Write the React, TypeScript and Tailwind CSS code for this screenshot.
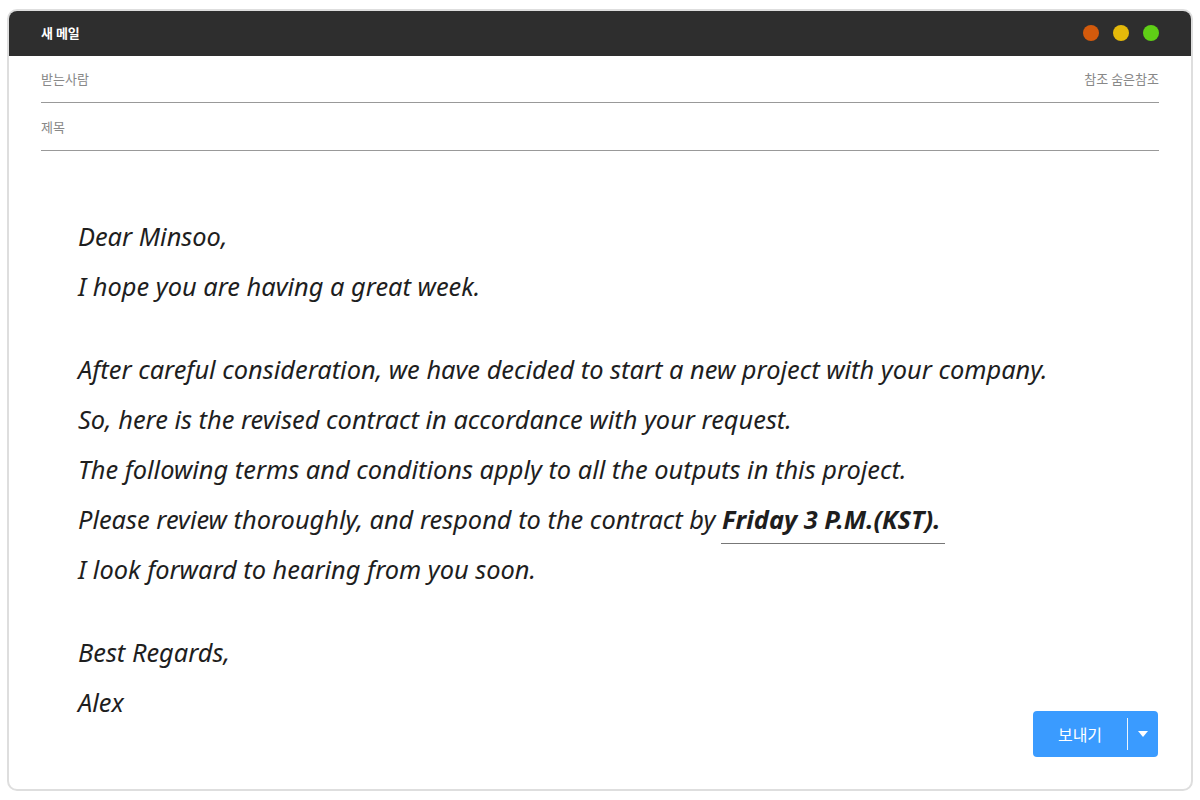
import React from 'react';

const kr = { fontFamily: '"Noto Sans CJK KR", "Noto Sans", sans-serif' };
const body = { fontFamily: '"Noto Sans", "Noto Sans CJK KR", sans-serif' };

export default function App() {
  return (
    <div className="min-h-screen bg-white pt-[9px] pl-[7px] pr-[7px]">
      <div className="flex h-[782px] w-[1186px] flex-col overflow-hidden rounded-[10px] border-2 border-[#dedede] bg-white">
        {/* Title bar */}
        <div className="-mx-[2px] -mt-[2px] flex h-[47px] items-center justify-between bg-[#2e2e2e] pl-[34px] pr-[34px]" style={kr}>
          <span className="text-[13px] font-bold text-white">새 메일</span>
          <div className="flex items-center gap-[14px]">
            <span className="h-4 w-4 rounded-full bg-[#d35a0c]" />
            <span className="h-4 w-4 rounded-full bg-[#e4b90a]" />
            <span className="h-4 w-4 rounded-full bg-[#5fcf16]" />
          </div>
        </div>

        {/* Fields */}
        <div className="px-[32px]" style={kr}>
          <div className="flex h-[47px] items-center justify-between border-b border-[#999] text-[13px] text-[#888]">
            <span>받는사람</span>
            <span>참조 숨은참조</span>
          </div>
          <div className="flex h-[48px] items-center border-b border-[#999] text-[13px] text-[#888]">
            <span>제목</span>
          </div>
        </div>

        {/* Body */}
        <div className="relative flex-1 pl-[69px] pt-[60px] text-[25.4px] italic leading-[50px] text-[#1e1e1e]" style={body}>
          <p>Dear Minsoo,</p>
          <p>I hope you are having a great week.</p>
          <div className="mt-[33px]">
            <p>After careful consideration, we have decided to start a new project with your company.</p>
            <p>So, here is the revised contract in accordance with your request.</p>
            <p>The following terms and conditions apply to all the outputs in this project.</p>
            <p>
              Please review thoroughly, and respond to the contract by{' '}
              <span className="relative font-bold">
                Friday 3 P.M.(KST).
                <span className="absolute -bottom-[8px] -left-[1px] -right-[4px] h-[1.5px] bg-[#777]" />
              </span>
            </p>
            <p>I look forward to hearing from you soon.</p>
          </div>
          <div className="mt-[33px]">
            <p>Best Regards,</p>
            <p>Alex</p>
          </div>

          <button
            className="absolute bottom-[32px] right-[33px] flex h-[46px] w-[125px] items-center rounded-[4px] bg-[#3a9bff] text-white not-italic"
            style={kr}
          >
            <span className="flex-1 text-[16px] leading-none">보내기</span>
            <span className="h-[32px] w-px bg-white/90" />
            <span className="flex w-[30px] justify-center">
              <svg width="10" height="6" viewBox="0 0 10 6">
                <path d="M0 0 L10 0 L5 6 Z" fill="white" />
              </svg>
            </span>
          </button>
        </div>
      </div>
    </div>
  );
}
